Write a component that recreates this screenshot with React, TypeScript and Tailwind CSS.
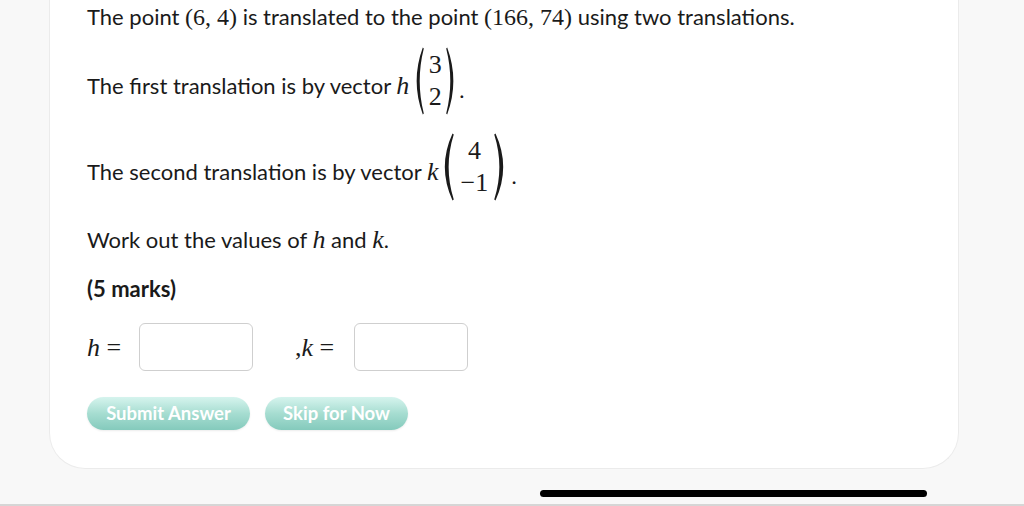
import React from 'react';

const math = "font-['Liberation_Serif',serif]";

const Paren = ({ side, w = 12 }: { side: 'l' | 'r'; w?: number }) => (
  <svg width={w} height="68" viewBox="0 0 12 68" preserveAspectRatio="none" className="shrink-0">
    {side === 'l' ? (
      <path d="M10.8,0.6 Q-1.5,34 10.8,67.4 L11.8,66.6 Q3.6,34 11.8,1.4 Z" fill="#1a1a1a" />
    ) : (
      <path d="M1.2,0.6 Q13.5,34 1.2,67.4 L0.2,66.6 Q8.4,34 0.2,1.4 Z" fill="#1a1a1a" />
    )}
  </svg>
);

const Vector = ({ top, bottom, w, pw }: { top: string; bottom: string; w: string; pw?: number }) => (
  <span className="inline-flex items-center">
    <Paren side="l" w={pw} />
    <span className={`flex flex-col items-center justify-between ${w} h-[68px] py-[2px] text-[26px] leading-[32px] ${math}`}>
      <span>{top}</span>
      <span>{bottom}</span>
    </span>
    <Paren side="r" w={pw} />
  </span>
);

const M = ({ children }: { children: React.ReactNode }) => (
  <span className={`${math} text-[24px]`}>{children}</span>
);

const V = ({ children }: { children: React.ReactNode }) => (
  <span className={`${math} italic text-[26px]`}>{children}</span>
);

export default function App() {
  return (
    <div className="w-[1024px] h-[506px] bg-[#f8f8f8] overflow-hidden relative font-['Lato',sans-serif] text-[#1a1a1a]">
      <div className="ml-[49px] w-[910px] h-[469px] bg-white rounded-b-[36px] border-x border-b border-[#ebebeb] pl-[37px] flex flex-col">
        <div className="h-[34px] flex items-center text-[22px] whitespace-nowrap">
          <span>
            The point <M>(6, 4)</M> is translated to the point <M>(166, 74)</M> using two translations.
          </span>
        </div>

        <div className="mt-[18px] h-[66px] flex items-center text-[22px] whitespace-nowrap">
          <span>The first translation is by vector&nbsp;</span>
          <V>h</V>
          <span className="ml-[3px]">
            <Vector top="3" bottom="2" w="w-[22px]" />
          </span>
          <span className="ml-[1px] mt-[8px]">.</span>
        </div>

        <div className="mt-[19px] h-[68px] flex items-center text-[22px] whitespace-nowrap">
          <span>The second translation is by vector&nbsp;</span>
          <V>k</V>
          <span className="ml-[1px]">
            <Vector top="4" bottom="−1" w="w-[40px]" pw={15} />
          </span>
          <span className="ml-[2px] mt-[8px]">.</span>
        </div>

        <div className="mt-[17px] h-[34px] flex items-center text-[22px] whitespace-nowrap">
          <span>
            Work out the values of <V>h</V> and <V>k</V>.
          </span>
        </div>

        <div className="mt-[15px] h-[34px] flex items-center text-[22px] font-bold">(5 marks)</div>

        <div className="mt-[18px] h-[48px] flex items-center">
          <span className={`${math} text-[26px] w-[52px] whitespace-nowrap`}>
            <i>h</i>&nbsp;=
          </span>
          <input className="w-[114px] h-[48px] border border-[#cfcfcf] rounded-[6px] bg-white outline-none" />
          <span className={`${math} text-[26px] ml-[42px] w-[59px] whitespace-nowrap`}>
            ,<i>k</i>&nbsp;=
          </span>
          <input className="w-[114px] h-[48px] border border-[#cfcfcf] rounded-[6px] bg-white outline-none" />
        </div>

        <div className="mt-[26px] flex items-center gap-[15px]">
          <button className="h-[33px] w-[163px] rounded-full bg-gradient-to-b from-[#d6f4ee] via-[#a6ddd1] to-[#84cabc] text-white font-bold text-[18.5px] shadow-[0_1px_2px_rgba(0,0,0,0.08)]">
            Submit Answer
          </button>
          <button className="h-[33px] w-[143px] rounded-full bg-gradient-to-b from-[#d6f4ee] via-[#a6ddd1] to-[#84cabc] text-white font-bold text-[18.5px] shadow-[0_1px_2px_rgba(0,0,0,0.08)]">
            Skip for Now
          </button>
        </div>
      </div>

      <div className="mt-[21px] ml-[540px] w-[387px] h-[7px] rounded-full bg-black" />
      <div className="absolute bottom-0 left-0 w-full h-[2px] bg-[#d6d6d6]" />
    </div>
  );
}
